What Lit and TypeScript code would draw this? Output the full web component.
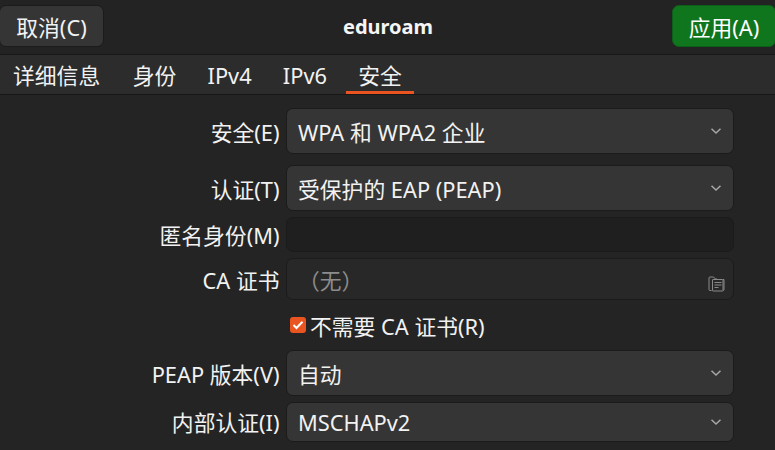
import { LitElement, html, css } from "lit";
import { customElement } from "lit/decorators.js";

const chevron = html`<svg class="chev" width="12" height="8" viewBox="0 0 12 8"><path d="M1.5 1.8 6 6l4.5-4.2" fill="none" stroke="#a8a8a8" stroke-width="1.5"/></svg>`;
const fileIcon = html`<svg class="file" width="17" height="16" viewBox="0 0 17 16" fill="none" stroke="#8a8a8a" stroke-width="1"><path d="M3.5 14.5H2a1 1 0 0 1-1-1V2a1 1 0 0 1 1-1h3.5l2 2H9"/><path d="M15 3.5h1v10a1 1 0 0 1-1 1"/><rect x="4.5" y="3.5" width="10.5" height="11.5" rx=".5"/><path d="M6.5 6.5h7M6.5 9h7M6.5 11.5h4"/></svg>`;

@customElement("app-root")
export class AppRoot extends LitElement {
  static styles = css`
    :host { display: block; width: 775px; height: 450px; overflow: hidden; background: #242424; color: #f2f2f2;
      font-family: "Noto Sans", "Noto Sans CJK SC", sans-serif; font-size: 21.8px; line-height: 28px; }
    .header { height: 55px; box-sizing: border-box; display: flex; align-items: flex-start; justify-content: space-between;
      padding-top: 5px; background: #232323; border-bottom: 1px solid #181818; }
    .btn { height: 42px; box-sizing: border-box; display: flex; align-items: center; justify-content: center; border-radius: 7px; padding-top: 3px; }
    .cancel { width: 105px; margin-left: -1px; background: #353535; border: 1px solid #1b1b1b; }
    .apply { width: 104px; background: #0f761e; border: 1px solid #0c5f18; color: #fff; margin-right: -1px; }
    .title { font-weight: 700; font-size: 20px; margin-top: 8px; color: #f5f5f5; }
    .tabs { height: 40px; box-sizing: border-box; display: flex; background: #2c2c2c; border-bottom: 1px solid #171717; padding-left: 13px; }
    .tab { position: relative; height: 39px; line-height: 42px; margin-right: 31.2px; }
    .tab:first-child { margin-right: 32.5px; }
    .tab.active::after { content: ""; position: absolute; left: -12px; right: -12px; bottom: 0; height: 3px; background: #e95420; }
    .form { padding-top: 13px; display: flex; flex-direction: column; }
    .row { display: flex; align-items: center; }
    .label { width: 279.5px; text-align: right; flex: none; white-space: nowrap; padding-top: 3px; }
    .field { width: 447.5px; height: 100%; margin-left: 6.5px; box-sizing: border-box; border: 1px solid #1b1b1b; border-radius: 7px;
      display: flex; align-items: center; justify-content: space-between; padding: 0 11px; }
    .field span { padding-top: 3px; }
    .select { background: #353535; }
    .entry { background: #1f1f1f; }
    .disabled { background: #282828; color: #8c8c8c; }
    .chev { flex: none; }
    .file { flex: none; align-self: flex-end; margin: 0 -3px 7px 0; }
    .check { display: flex; align-items: center; margin-left: 290px; height: 18px; }
    .check-text { padding-top: 3px; }
    .box { width: 16px; height: 16px; background: #e95420; border-radius: 3px; display: flex; align-items: center; justify-content: center; margin-right: 4px; }
    .h46 { height: 46px; } .h35 { height: 35px; } .h42 { height: 42px; } .h40 { height: 40px; }
    .mt11 { margin-top: 11px; } .mt6 { margin-top: 6px; } .mt16 { margin-top: 16px; }
    .last .label, .last .field span { padding-top: 1px; }
  `;

  render() {
    const select = (label: string, value: string, cls: string) => html`
      <div class="row ${cls}"><div class="label">${label}</div>
        <div class="field select"><span>${value}</span>${chevron}</div></div>`;
    return html`
      <div class="header">
        <div class="btn cancel">取消(C)</div>
        <div class="title">eduroam</div>
        <div class="btn apply">应用(A)</div>
      </div>
      <div class="tabs">
        <div class="tab">详细信息</div>
        <div class="tab">身份</div>
        <div class="tab">IPv4</div>
        <div class="tab">IPv6</div>
        <div class="tab active">安全</div>
      </div>
      <div class="form">
        ${select("安全(E)", "WPA 和 WPA2 企业", "h46")}
        ${select("认证(T)", "受保护的 EAP (PEAP)", "h46 mt11")}
        <div class="row h35 mt6"><div class="label">匿名身份(M)</div><div class="field entry"></div></div>
        <div class="row h42 mt6"><div class="label">CA 证书</div>
          <div class="field disabled"><span>（无）</span>${fileIcon}</div></div>
        <div class="check mt16"><div class="box"><svg width="12" height="10" viewBox="0 0 12 10"><path d="M1.5 5 4.5 8 10.5 1.8" fill="none" stroke="#fff" stroke-width="2"/></svg></div><div class="check-text">不需要 CA 证书(R)</div></div>
        ${select("PEAP 版本(V)", "自动", "h46 mt16")}
        ${select("内部认证(I)", "MSCHAPv2", "h40 mt6 last")}
      </div>`;
  }
}
